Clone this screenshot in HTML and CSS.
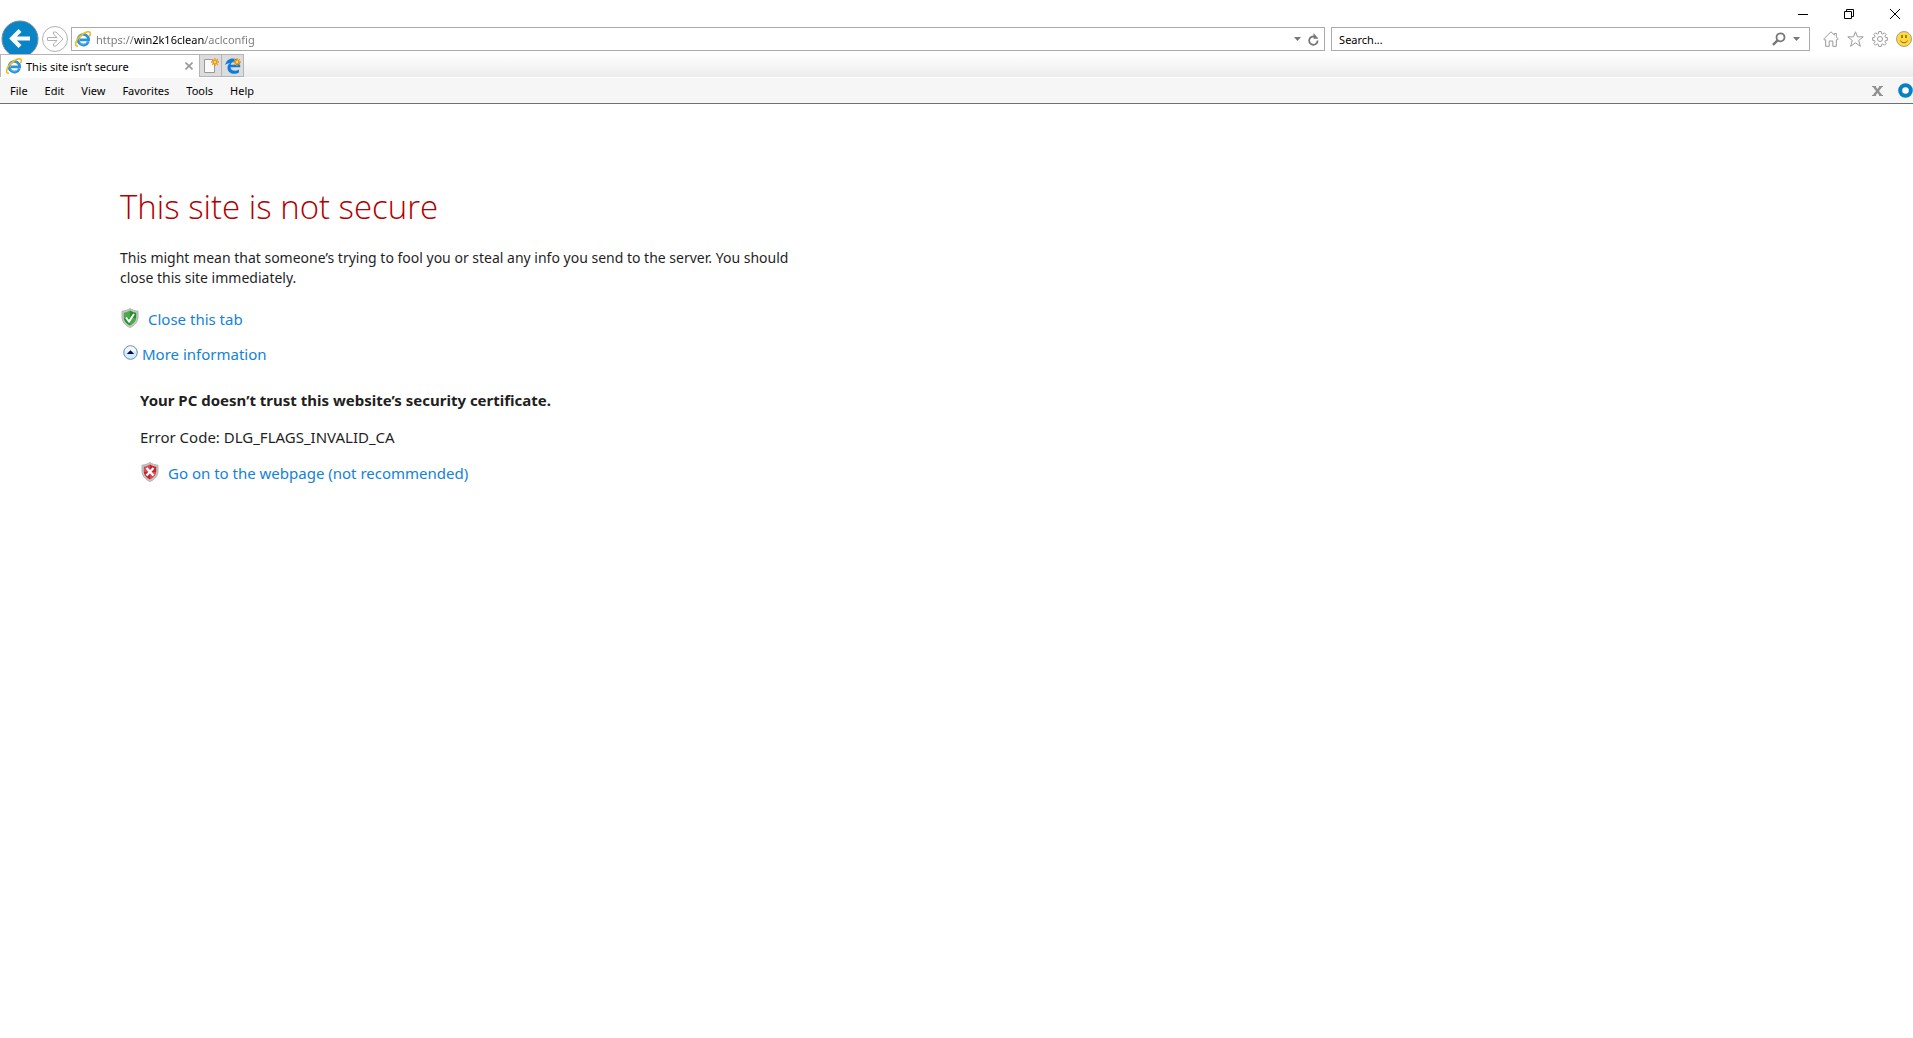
FILE: index.html
```html
<!DOCTYPE html>
<html lang="en">
<head>
    <meta charset="UTF-8">
    <meta name="viewport" content="width=device-width, initial-scale=1.0">
    <title>This site isn’t secure</title>
    <link rel="stylesheet" href="styles.css">
</head>
<body>
    <!-- Shared icons -->
    <svg class="sprite" aria-hidden="true">
        <symbol id="ie" viewBox="0 0 16 16">
            <path d="M13.400 10.500A5.300 5.300 0 1 1 13.700 8.800H4.800" fill="none" stroke="#2b93dc" stroke-width="2.700"/>
            <path d="M12.600 10.300A4.600 4.600 0 0 1 4.600 11.200M4.300 7.100A4.500 4.500 0 0 1 8 4.300" fill="none" stroke="#6cc5f5" stroke-width="1"/>
            <path d="M3 15C0 15.800-.2 12.400 2.400 8.400 5.600 3.600 11.700-.2 14.500 1 15.900 1.700 15.300 4 14.400 5.400" fill="none" stroke="#f2bc1b" stroke-width="1.600"/>
        </symbol>
        <symbol id="spark" viewBox="0 0 8 8">
            <path d="M4 0v8M0 4h8M1.200 1.200l5.600 5.600M6.800 1.200L1.200 6.800" stroke="#e99a1c" stroke-width="1.300"/>
            <circle cx="4" cy="4" r="1.200" fill="#ffd56b"/>
        </symbol>
        <symbol id="shield" viewBox="0 0 18 20">
            <path d="M9 .5C11 2 14 3 17 3.200V9c0 5-3.500 8.500-8 10.500C4.500 17.500 1 14 1 9V3.200C4 3 7 2 9 .5z" fill="#c6c8c6" stroke="#b0b2b0"/>
            <path d="M9 2.500C11 3.800 13 4.500 15.200 4.800V9c0 4-2.500 6.700-6.200 8.500C5.300 15.700 2.800 13 2.800 9V4.800C5 4.500 7 3.800 9 2.500z" fill="currentColor"/>
            <path d="M9 2.500V10H2.900C2.800 8 2.800 6 2.800 4.800 5 4.500 7 3.800 9 2.500zM9 10h6.100c-.4 3.500-2.700 5.900-6.100 7.500z" fill="#fff" opacity=".2"/>
        </symbol>
    </svg>

    <header>
        <div class="top">
            <div class="nav-buttons">
                <button class="btn-back" aria-label="Back">
                    <svg width="38" height="38" viewBox="0 0 38 38">
                        <circle cx="19" cy="19" r="18" fill="#0984c6" stroke="#7d8b94"/>
                        <path d="M29 18.500H12M19 10.500l-8 8 8 8" fill="none" stroke="#fff" stroke-width="4"/>
                    </svg>
                </button>
                <button class="btn-forward" aria-label="Forward">
                    <svg width="26" height="26" viewBox="0 0 26 26">
                        <circle cx="13" cy="13" r="12.500" fill="#fff" stroke="#b2b2b2"/>
                        <path d="M5.500 11.500h9.500L11.500 8V6h2.500l7 7-7 7h-2.500v-2l3.500-3.500H5.500z" fill="#fff" stroke="#b2b2b2"/>
                    </svg>
                </button>
            </div>
            <div class="top-main">
                <div class="titlebar">
                    <button aria-label="Minimize"><svg width="10" height="10" viewBox="0 0 10 10"><path d="M0 5.500h10" stroke="#000"/></svg></button>
                    <button aria-label="Restore"><svg width="10" height="10" viewBox="0 0 10 10"><path d="M.5 2.500h7v7h-7zM2.500 2.500v-2h7v7h-2" fill="none" stroke="#000"/></svg></button>
                    <button aria-label="Close"><svg width="10" height="10" viewBox="0 0 10 10"><path d="M0 0l10 10M10 0L0 10" stroke="#000"/></svg></button>
                </div>
                <div class="bars">
                    <form class="box address">
                        <svg width="16" height="16"><use href="#ie"/></svg>
                        <input type="text" class="url" aria-label="Address" value="https://win2k16clean/aclconfig">
                        <button type="button" aria-label="Show address history"><svg width="7" height="4" viewBox="0 0 7 4"><path d="M0 0h7L3.500 4z" fill="#777"/></svg></button>
                        <button type="button" aria-label="Refresh"><svg width="11" height="13" viewBox="0 0 11 13"><path d="M9.600 7.500A4.200 4.200 0 1 1 7 3.700" fill="none" stroke="#777" stroke-width="1.800"/><path d="M5.500 0v5.800H10.500z" fill="#777"/></svg></button>
                    </form>
                    <form class="box search">
                        <input type="text" aria-label="Search" placeholder="Search...">
                        <button type="button" aria-label="Search"><svg width="14" height="14" viewBox="0 0 14 14"><circle cx="8.500" cy="5.300" r="4" fill="none" stroke="#777" stroke-width="1.800"/><path d="M5.500 8.300L1 12.800" stroke="#777" stroke-width="2.400"/></svg></button>
                        <button type="button" aria-label="Search options"><svg width="7" height="4" viewBox="0 0 7 4"><path d="M0 0h7L3.500 4z" fill="#777"/></svg></button>
                    </form>
                    <div class="tools">
                        <button aria-label="Home"><svg width="16" height="16" viewBox="0 0 16 16"><path d="M8 .8L.7 8l1.300 1.300.7-.6V15.300H6.200V10h3.600v5.300h3.500V8.700l.7.6L15.300 8l-2-2V2.500h-2V4z" fill="#fff" stroke="#9a9a9a"/></svg></button>
                        <button aria-label="Favorites"><svg width="17" height="16" viewBox="0 0 17 16"><path d="M8.500.8l2 5h5.700l-4.500 3.700 1.700 5.800-4.900-3.500-4.900 3.500 1.700-5.800L.8 5.800h5.700z" fill="#fff" stroke="#9a9a9a"/></svg></button>
                        <button aria-label="Tools"><svg width="16" height="16" viewBox="0 0 16 16"><path d="M6.700.6h2.600l.3 2 1.200.5L12.400 1.800l1.800 1.800-1.300 1.600.5 1.200 2 .3v2.600l-2 .3-.5 1.200 1.300 1.600-1.800 1.800-1.600-1.300-1.200.5-.3 2H6.700l-.3-2-1.200-.5-1.600 1.300-1.800-1.800 1.300-1.600-.5-1.200-2-.3V6.700l2-.3.5-1.200-1.300-1.600 1.800-1.800 1.600 1.300 1.200-.5z" fill="#fff" stroke="#9a9a9a"/><circle cx="8" cy="8" r="2.500" fill="#fff" stroke="#9a9a9a"/></svg></button>
                        <button aria-label="Feedback"><svg width="16" height="16" viewBox="0 0 16 16"><circle cx="8" cy="8" r="7.500" fill="#ffd83d" stroke="#a9a08a"/><path d="M6 4v3M10 4v3" stroke="#6d5d26" stroke-width="1.400"/><path d="M4.300 9.500c1.500 3 5.900 3 7.400 0" fill="none" stroke="#8a7018"/></svg></button>
                    </div>
                </div>
            </div>
        </div>

        <div class="tabs">
            <div class="tab">
                <svg width="16" height="16"><use href="#ie"/></svg>
                <span>This site isn’t secure</span>
                <button aria-label="Close tab"><svg width="8" height="8" viewBox="0 0 8 8"><path d="M.5.5l7 7M7.500.5l-7 7" stroke="#999" stroke-width="1.600"/></svg></button>
            </div>
            <button class="tab-btn" aria-label="New tab">
                <svg width="16" height="16" viewBox="0 0 16 16"><path d="M1.500 1.500h7l3 3v10h-10z" fill="#fafafa" stroke="#999"/><use href="#spark" x="8" y="0" width="8" height="8"/></svg>
            </button>
            <button class="tab-btn" aria-label="Open Microsoft Edge">
                <svg width="16" height="16" viewBox="0 0 16 16"><path d="M.3 7.300C.8 3 3.800.5 7.900.5c5 0 7.600 3.700 7.300 8.700H5.500c.2 3.900 5.400 4.500 8.500 2.400v3C9.800 17 2.500 15.900 2.500 9.800c0-2 .9-3.700 2.700-4.700C3.200 5.200 1.500 6 .3 7.300zM5.700 6.800h5.400C11 3.200 6.300 3.200 5.700 6.800z" fill="#0b7bdc"/><use href="#spark" x="8" y="0" width="8" height="8"/></svg>
            </button>
        </div>

        <nav class="menu">
            <button>File</button>
            <button>Edit</button>
            <button>View</button>
            <button>Favorites</button>
            <button>Tools</button>
            <button>Help</button>
            <div class="menu-right">
                <button aria-label="Close toolbar"><svg width="11" height="10" viewBox="0 0 11 10"><path d="M0 .5h4M7 .5h4M0 9.500h4M7 9.500h4" stroke="#929292"/><path d="M2 .5l7 9M9 .5l-7 9" stroke="#929292" stroke-width="2.400"/></svg></button>
                <button aria-label="Toolbar add-on"><svg width="15" height="15" viewBox="0 0 15 15"><circle cx="7.500" cy="7.500" r="5.300" fill="#fff" stroke="#0a80c4" stroke-width="4"/></svg></button>
            </div>
        </nav>
    </header>

    <main>
        <h1>This site is not secure</h1>
        <p class="intro">This might mean that someone’s trying to fool you or steal any info you send to the server. You should close this site immediately.</p>

        <a class="action" href="#">
            <svg class="green" width="18" height="20" viewBox="0 0 18 20"><use href="#shield"/><path d="M5 9.500l3 4 5-7.500" fill="none" stroke="#fff" stroke-width="2"/></svg>
            <span>Close this tab</span>
        </a>
        <a class="action more" href="#info">
            <svg width="15" height="15" viewBox="0 0 15 15"><circle cx="7.500" cy="7.500" r="6.800" fill="#d3ecfa" stroke="#6f86b3"/><path d="M2 6.500a5.500 5 0 0 1 11 0z" fill="#f2faff"/><path d="M3.800 9L7.500 5.200 11.200 9z" fill="#06065e"/></svg>
            <span>More information</span>
        </a>

        <div class="info" id="info">
            <p><strong>Your PC doesn’t trust this website’s security certificate.</strong></p>
            <p>Error Code: DLG_FLAGS_INVALID_CA</p>
            <a class="action" href="#">
                <svg class="red" width="18" height="20" viewBox="0 0 18 20"><use href="#shield"/><path d="M5.500 6l7 7.500M12.500 6l-7 7.500" stroke="#fff" stroke-width="2.400"/></svg>
                <span>Go on to the webpage (not recommended)</span>
            </a>
        </div>
    </main>
</body>
</html>
```
FILE: styles.css
```css
body {
    font-family: 'Segoe UI', 'Noto Sans', sans-serif;
    font-size: 15px;
    color: #1f1f1f;
    background-color: #fff;
    margin: 0;
}

button {
    display: flex;
    align-items: center;
    justify-content: center;
    background: none;
    border: none;
    padding: 0;
    font: inherit;
    color: inherit;
    cursor: pointer;
}

svg {
    display: block;
    flex: none;
}

.sprite {
    position: absolute;
    width: 0;
    height: 0;
}

header {
    font-size: 11px;
    color: #000;
}

/* Window buttons, address bar and search */
.top {
    display: flex;
    height: 54px;
    overflow: hidden;
}

.nav-buttons {
    display: flex;
    align-items: center;
    gap: 3px;
    height: 38px;
    padding: 20px 3px 0 1px;
}

.top-main {
    flex: 1;
}

.titlebar {
    display: flex;
    justify-content: flex-end;
    gap: 36px;
    height: 27px;
    padding-right: 13px;
}

.bars {
    display: flex;
    gap: 6px;
}

.box {
    display: flex;
    align-items: center;
    box-sizing: border-box;
    height: 24px;
    border: 1px solid #ababab;
    background: #fff;
}

.box input {
    flex: 1;
    min-width: 0;
    border: none;
    outline: none;
    padding: 0;
    background: none;
    font: inherit;
    color: #000;
}

.box input::placeholder {
    color: #000;
}

.address {
    flex: 1;
    gap: 5px;
    padding: 0 5px 0 3px;
}

/* The host is darker than the rest of the address */
.address .url {
    color: transparent;
    background: linear-gradient(to right, #777 38px, #000 38px, #000 109px, #777 109px);
    background-clip: text;
    -webkit-background-clip: text;
}

.address button:last-child {
    margin-left: 2px;
}

.search {
    width: 26%;
    gap: 7px;
    padding: 0 9px 0 7px;
}

.tools {
    display: flex;
    align-items: center;
    gap: 8px;
    padding: 0 1px 0 7px;
}

/* Tabs */
.tabs {
    display: flex;
    height: 23px;
    background: linear-gradient(#fff, #ececec);
}

.tab {
    display: flex;
    align-items: center;
    gap: 4px;
    box-sizing: border-box;
    width: 200px;
    padding: 0 6px 0 5px;
    border: 1px solid #b5b5b5;
    border-bottom: none;
    background: #fff;
}

.tab span {
    flex: 1;
}

.tab-btn {
    box-sizing: border-box;
    width: 22px;
    border: 1px solid #b5b5b5;
    border-left: none;
    background: #dcdcdc;
}

/* Menu */
.menu {
    display: flex;
    align-items: center;
    gap: 17px;
    height: 25px;
    padding: 0 0 0 10px;
    background: #f6f6f6;
    border-top: 1px solid #fff;
    border-bottom: 1px solid #707070;
}

.menu-right {
    display: flex;
    align-items: center;
    gap: 15px;
    margin-left: auto;
}

/* Page content */
main {
    padding: 79px 120px;
}

h1 {
    margin: 0;
    font-family: 'Segoe UI Light', 'Open Sans', sans-serif;
    font-size: 33px;
    font-weight: 300;
    line-height: 48px;
    color: #b20000;
}

.intro {
    max-width: 700px;
    margin: 17px 0 20px;
    font-size: 14px;
    line-height: 20px;
}

.action {
    display: flex;
    align-items: flex-start;
    gap: 9px;
    width: fit-content;
    padding-left: 1px;
    line-height: 22px;
    color: #1382d7;
    text-decoration: none;
}

.more {
    gap: 4px;
    margin-top: 13px;
    padding-left: 3px;
}

.more svg {
    margin-top: 2px;
}

.info {
    padding: 25px 20px;
}

.info p {
    margin: 0 0 17px;
    line-height: 20px;
}

.info p + p {
    margin-bottom: 15px;
}

.green {
    color: #1d9422;
}

.red {
    color: #c9202b;
}
```
